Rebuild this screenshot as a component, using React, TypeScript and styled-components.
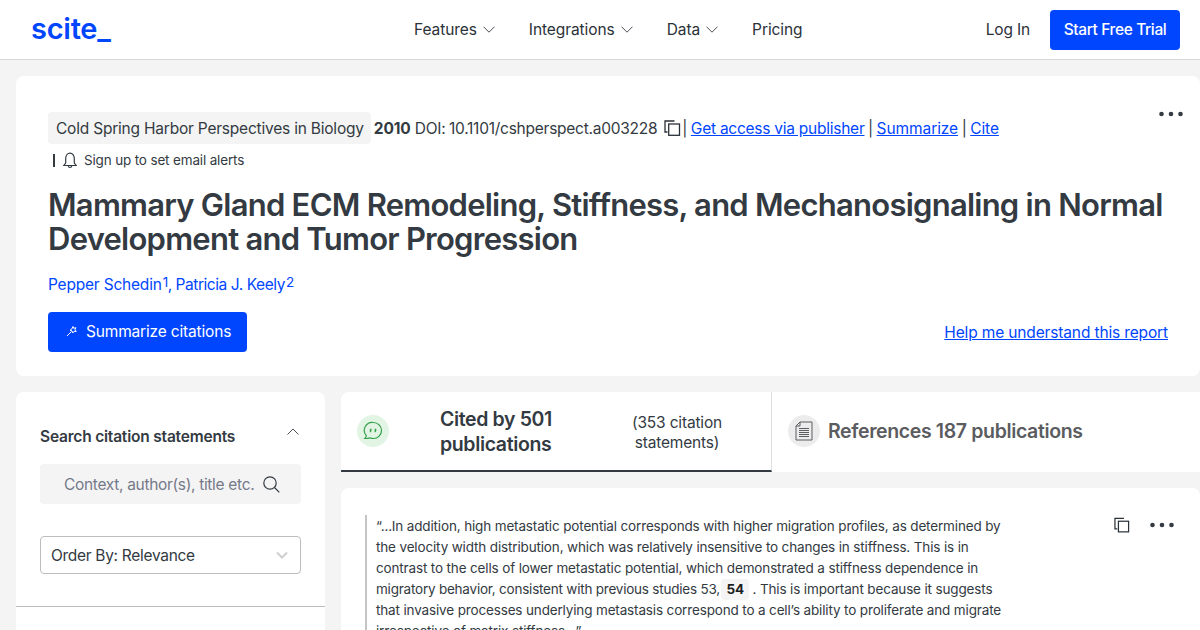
import React from "react";
import styled, { createGlobalStyle } from "styled-components";

const Global = createGlobalStyle`
  html, body { margin: 0; padding: 0; background: #f4f4f4; overflow: hidden; }
  body { width: 1200px; height: 630px; font-family: "Inter", "Liberation Sans", sans-serif; color: #333a42; }
  * { box-sizing: border-box; }
`;
const Page = styled.div`width: 1200px; height: 630px; overflow: hidden;`;
const Header = styled.header`
  height: 60px; background: #fff; border-bottom: 1px solid #d8d8d8;
  display: grid; grid-template-columns: 382px 1fr auto; align-items: center; padding: 0 20px 0 32px;
`;
const Logo = styled.a`
  font: 600 29px/1 "Inter", sans-serif; color: #0046ff; letter-spacing: -0.25px; position: relative; top: -1px; margin-left: -1px;
`;
const Nav = styled.nav`display: flex; gap: 34px; align-items: center;`;
const NavItem = styled.a`
  display: flex; align-items: center; gap: 6px; font-size: 15.5px; letter-spacing: -0.08px; color: #2b3138;
`;
const Right = styled.div`display: flex; align-items: center; gap: 20px;`;
const LogIn = styled.a`font-size: 15.5px; letter-spacing: -0.17px; color: #2b3138;`;
const Trial = styled.a`
  height: 40px; width: 130px; background: #0046ff; color: #fff; border-radius: 4px; font-size: 15.5px; font-weight: 500;
  letter-spacing: -0.37px; display: flex; align-items: center; justify-content: center;
`;
const Main = styled.main`padding: 16px 0 0 16px; display: flex; flex-direction: column; gap: 16px;`;
const HeadCard = styled.section`
  position: relative; height: 300px; background: #fff; border-radius: 8px; padding: 36px 32px 0;
`;
const MetaRow = styled.div`
  display: flex; align-items: center; font-size: 15.5px; letter-spacing: -0.25px; word-spacing: -0.5px; height: 32px; color: #333a42; white-space: pre;
`;
const Journal = styled.span`
  background: #f4f4f4; border-radius: 4px; height: 32px; display: inline-flex; align-items: center; padding: 0 7px 0 8px; margin-right: 3px; letter-spacing: -0.21px; word-spacing: 0;
`;
const Year = styled.b`font-weight: 700; margin-right: 4px; letter-spacing: -0.1px;`;
const TextLink = styled.a`color: #0046ff; text-decoration: underline; word-spacing: 0;`;
const ShortLink = styled(TextLink)`letter-spacing: -0.08px;`;
const CopyWrap = styled.span`display: inline-flex; margin: 0 1px 0 7px;`;
const MoreBtn = styled.span`position: absolute; right: 17px; top: 35px; display: flex;`;
const AlertRow = styled.div`
  display: flex; align-items: center; height: 32px; font-size: 13.5px; letter-spacing: -0.16px; color: #333a42;
`;
const Sep = styled.span`width: 2px; height: 13px; background: #333a42; margin: 0 8px 0 5px;`;
const BellWrap = styled.span`display: inline-flex; margin-right: 7px;`;
const Title = styled.h1`
  margin: 12px 0 0; font-size: 31px; line-height: 34px; font-weight: 600; letter-spacing: -0.75px; color: #333a42; width: 1125px;
`;
const Authors = styled.div`
  margin-top: 14px; height: 28px; font-size: 15.5px; letter-spacing: -0.5px; color: #0046ff; display: flex; align-items: center; white-space: pre;
`;
const Author = styled.a<{ $track: number }>`letter-spacing: ${p => p.$track}px;`;
const Sup = styled.sup`font-size: 13.5px; line-height: 0; margin: 0 0 0 1px; position: relative; top: -2px;`;
const ActionRow = styled.div`display: flex; justify-content: space-between; align-items: center; margin-top: 14px;`;
const Summarize = styled.button`
  width: 199px; height: 40px; border: 0; border-radius: 4px; background: #0046ff; color: #fff; font: 400 15.5px "Inter", sans-serif;
  letter-spacing: -0.17px; display: flex; align-items: center; padding: 0 0 2px 18px; gap: 8px;
`;
const Help = styled.a`font-size: 15.5px; letter-spacing: -0.14px; color: #0046ff; text-decoration: underline;`;
const Columns = styled.div`display: flex; gap: 16px; align-items: flex-start;`;
const Side = styled.aside`width: 309px; height: 300px; background: #fff; border-radius: 8px;`;
const SidePad = styled.div`padding: 32px 24px 32px; height: 215px; border-bottom: 1px solid #bdbdbd;`;
const SideHead = styled.div`display: flex; justify-content: space-between; align-items: center; height: 24px; margin-bottom: 16px;`;
const SideTitle = styled.h3`margin: 0; font-size: 15.5px; font-weight: 600; letter-spacing: -0.2px; color: #333a42;`;
const UpChev = styled.span`display: flex; margin: -9px 2px 0 0;`;
const Search = styled.div`
  height: 40px; background: #f4f4f4; border-radius: 4px; display: flex; align-items: center; padding-left: 24px; gap: 9px;
  font-size: 15.5px; letter-spacing: -0.32px; color: #75798a; white-space: nowrap; width: 261px;
`;
const Select = styled.div`
  margin-top: 32px; width: 261px; height: 38px; border: 1px solid #bdbdbd; border-radius: 4px; padding: 0 12px 0 10px;
  display: flex; align-items: center; justify-content: space-between; font-size: 15.5px; letter-spacing: -0.3px; color: #333a42;
`;
const Content = styled.div`flex: 1; display: flex; flex-direction: column; gap: 16px;`;
const Tabs = styled.div`display: flex; height: 80px;`;
const ActiveTab = styled.div`
  width: 431px; background: #fff; border-bottom: 2px solid #333a42; border-right: 1px solid #dedede; border-top-left-radius: 8px;
  display: flex; align-items: center; padding: 0 0 0 16px;
`;
const TabBadge = styled.span<{ $bg: string }>`
  width: 32px; height: 32px; border-radius: 50%; background: ${p => p.$bg}; display: flex; align-items: center; justify-content: center; flex: none;
`;
const ActiveLabel = styled.div`
  margin-left: 51px; width: 160px; font-size: 19.5px; line-height: 25px; font-weight: 600; letter-spacing: -0.37px; color: #333a42; padding-top: 2px;
`;
const Count = styled.div`
  margin-left: 2px; width: 150px; text-align: center; font-size: 15.5px; line-height: 20px; letter-spacing: -0.18px; color: #333a42; padding-top: 4px;
`;
const OtherTab = styled.div`
  flex: 1; background: #fff; display: flex; align-items: center; padding-left: 16px; gap: 8px; padding-bottom: 2px;
  font-size: 19.5px; font-weight: 600; letter-spacing: -0.37px; color: #5a5c60;
`;
const Statement = styled.section`position: relative; height: 200px; background: #fff; border-radius: 8px; padding: 27px 0 0 24px;`;
const Quote = styled.blockquote`
  margin: 0; width: 640px; border-left: 2px solid #c4c4c4; padding: 1px 0 0 9px; font-size: 13.5px; line-height: 21px; letter-spacing: -0.15px; color: #333a42; white-space: nowrap;
`;
const TightRun = styled.span`letter-spacing: -0.22px;`;
const Ref = styled.b`
  display: inline-block; background: #f4f4f4; border-radius: 4px; padding: 0 5px; font-weight: 700; color: #1a1d21; margin-left: -2px;
`;
const Tools = styled.div`position: absolute; right: 26px; top: 29px; display: flex; align-items: center; gap: 20px;`;

const Chev = ({ up = false }: { up?: boolean }) => (
  <svg width="12" height="7" viewBox="0 0 12 7" fill="none" stroke="#4a4f55" strokeWidth="1">
    <path d={up ? "M.5 6.500L6 1L11.500 6.500" : "M.5 .7L6 6.200L11.500 .7"} />
  </svg>
);
const Copy = ({ width = 17 }: { width?: number }) => (
  <svg width={width} height="16" viewBox="0 0 17 16" fill="none" stroke="#2b3138" strokeWidth="1.3">
    <path d="M10.500 1H1V12H3.500" />
    <rect x="4.700" y="4" width="10.800" height="11.300" />
  </svg>
);
const Dots = () => (
  <svg width="24" height="6" viewBox="0 0 24 6" fill="#333a42">
    <circle cx="2.500" cy="3" r="2.300" /><circle cx="12" cy="3" r="2.300" /><circle cx="21.500" cy="3" r="2.300" />
  </svg>
);
const Bell = () => (
  <svg width="14" height="17" viewBox="0 0 14 17" fill="none" stroke="#333a42" strokeWidth="1.200">
    <path d="M.8 13.500h12.400l-1.900-2.400V6.500C11.300 3.500 9.400 1.200 7 1.200S2.700 3.500 2.700 6.500v4.600L.8 13.500z" />
    <path d="M5.300 14c.2 1.900 3.200 1.900 3.400 0" />
  </svg>
);
const Wand = () => (
  <svg width="12" height="12" viewBox="0 0 12 12" fill="none" stroke="#fff" strokeWidth="1">
    <path d="M1 11L5.500 6.500" />
    <path d="M7 1.500l.7 1.800 2.300-.6-1 2 1.300 1.700-2.300-.1L6.800 8 6 5.900 4 5.200l1.800-1.200z" />
  </svg>
);
const SearchIcon = () => (
  <svg width="17" height="17" viewBox="0 0 17 17" fill="none" stroke="#333a42" strokeWidth="1.200">
    <circle cx="7" cy="7" r="6.200" /><path d="M11.500 11.500L16.300 16.300" />
  </svg>
);
const SelectChev = () => (
  <svg width="12" height="8" viewBox="0 0 12 8" fill="none" stroke="#cfcfcf" strokeWidth="2">
    <path d="M1 1.500L6 6.500L11 1.500" />
  </svg>
);
const ChatQuote = () => (
  <svg width="20" height="20" viewBox="0 0 20 20" fill="none" stroke="#35a04a" strokeWidth="1.200">
    <path d="M10.500 1.500a8 8 0 0 1 0 16c-1.500 0-2.700-.3-3.700-.8-1.200.7-3 .9-5 .7 1-.8 1.500-1.700 1.500-2.700A8 8 0 0 1 10.500 1.500z" />
    <path d="M7.700 7.700v1.800c0 .6-.3 1-.8 1.200M12.500 7.700v1.800c0 .6-.3 1-.8 1.200" strokeWidth="1.600" />
  </svg>
);
const DocIcon = () => (
  <svg width="18" height="20" viewBox="0 0 18 20" fill="none" stroke="#5a5c60" strokeWidth="1">
    <path d="M5 1h12v18H1V5z" /><path d="M5 1v4H1" />
    <path d="M4 7.500h10M4 9.500h10M4 11.500h10M4 13.500h10M4 15.500h10" />
  </svg>
);

export default function App() {
  return (
    <Page>
      <Global />
      <Header>
        <Logo>scite_</Logo>
        <Nav>
          <NavItem>Features <Chev /></NavItem>
          <NavItem>Integrations <Chev /></NavItem>
          <NavItem>Data <Chev /></NavItem>
          <NavItem>Pricing</NavItem>
        </Nav>
        <Right>
          <LogIn>Log In</LogIn>
          <Trial>Start Free Trial</Trial>
        </Right>
      </Header>
      <Main>
        <HeadCard>
          <MoreBtn><Dots /></MoreBtn>
          <MetaRow>
            <Journal>Cold Spring Harbor Perspectives in Biology</Journal>
            <Year>2010</Year>DOI: 10.1101/cshperspect.a003228
            <CopyWrap><Copy /></CopyWrap>| <TextLink>Get access via publisher</TextLink> | <ShortLink>Summarize</ShortLink> | <ShortLink>Cite</ShortLink>
          </MetaRow>
          <AlertRow><Sep /><BellWrap><Bell /></BellWrap>Sign up to set email alerts</AlertRow>
          <Title>Mammary Gland ECM Remodeling, Stiffness, and Mechanosignaling in Normal Development and Tumor Progression</Title>
          <Authors>
            <Author $track={-0.2}>Pepper Schedin</Author><Sup>1</Sup>, <Author $track={-0.43}>Patricia J. Keely</Author><Sup>2</Sup>
          </Authors>
          <ActionRow>
            <Summarize><Wand />Summarize citations</Summarize>
            <Help>Help me understand this report</Help>
          </ActionRow>
        </HeadCard>
        <Columns>
          <Side>
            <SidePad>
              <SideHead><SideTitle>Search citation statements</SideTitle><UpChev><Chev up /></UpChev></SideHead>
              <Search>Context, author(s), title etc.<SearchIcon /></Search>
              <Select>Order By: Relevance<SelectChev /></Select>
            </SidePad>
          </Side>
          <Content>
            <Tabs>
              <ActiveTab>
                <TabBadge $bg="#e2f5e4"><ChatQuote /></TabBadge>
                <ActiveLabel>Cited by 501 publications</ActiveLabel>
                <Count>(353 citation statements)</Count>
              </ActiveTab>
              <OtherTab>
                <TabBadge $bg="#ececec"><DocIcon /></TabBadge>
                References 187 publications
              </OtherTab>
            </Tabs>
            <Statement>
              <Quote>
                “...In addition, high metastatic potential corresponds with higher migration profiles, as determined by<br />
                the velocity width distribution, which was relatively insensitive to changes in stiffness. This is in<br />
                contrast to the cells of lower metastatic potential, which demonstrated a stiffness dependence in<br />
                <TightRun>migratory behavior, consistent with previous studies 53, </TightRun><Ref>54</Ref> . This is important because it suggests<br />
                that invasive processes underlying metastasis correspond to a cell’s ability to proliferate and migrate<br />
                irrespective of matrix stiffness...”
              </Quote>
              <Tools><Copy width={16} /><Dots /></Tools>
            </Statement>
          </Content>
        </Columns>
      </Main>
    </Page>
  );
}
